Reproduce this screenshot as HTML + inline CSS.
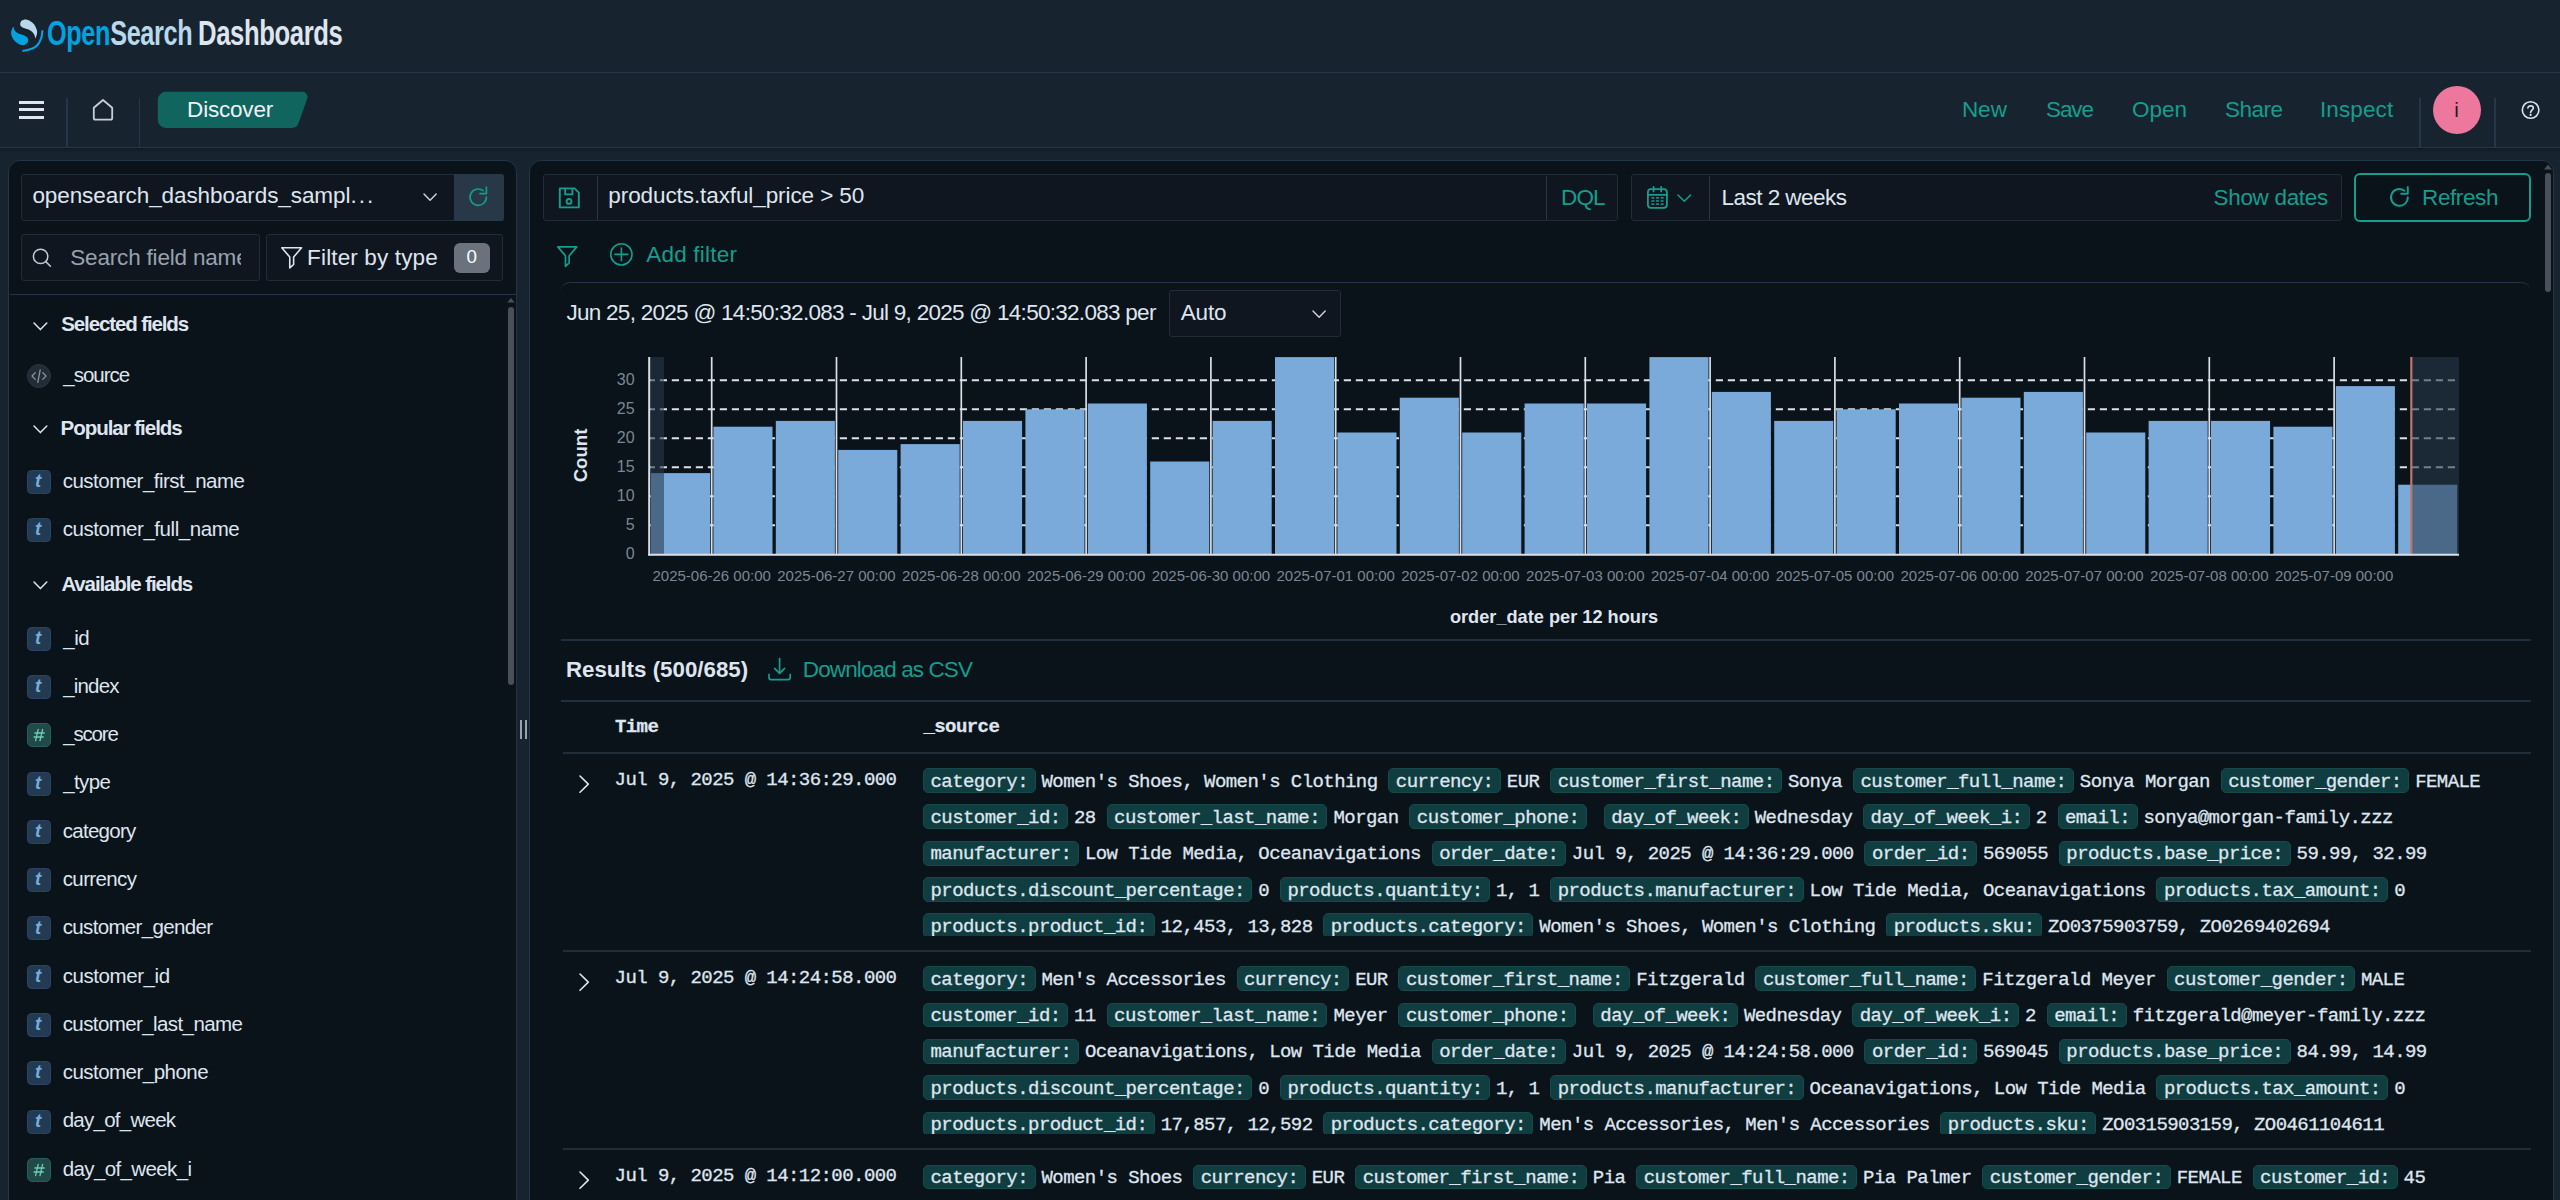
<!DOCTYPE html>
<html><head><meta charset="utf-8"><title>Discover - OpenSearch Dashboards</title>
<style>
html,body{margin:0;padding:0;width:2560px;height:1200px;overflow:hidden;}
body{width:2560px;height:1200px;overflow:hidden;background:#172430;position:relative;font-family:"Liberation Sans",sans-serif;}
.a{position:absolute;box-sizing:border-box;}
.t{position:absolute;white-space:pre;line-height:1;}
.mo{position:absolute;font-family:"Liberation Mono",monospace;font-size:19px;letter-spacing:-0.563px;line-height:1;white-space:pre;color:#DFE5EF;-webkit-text-stroke:0.3px #DFE5EF}
.bd{position:absolute;box-sizing:border-box;height:24.8px;background:#0F3D40;border:1px solid #15494B;border-radius:5px}
</style></head><body>
<div id="root" style="position:absolute;left:0;top:0;width:2560px;height:1200px;overflow:hidden;background:#172430">

<div class="a" style="left:0px;top:71.8px;width:2560px;height:1.5px;background:#243647;"></div>
<div class="a" style="left:0px;top:146.8px;width:2560px;height:1.5px;background:#243647;"></div>
<div class="a" style="left:0px;top:148.3px;width:2560px;height:5px;background:linear-gradient(#111b26,#172430);"></div>
<svg class="a" style="left:0px;top:0px;" width="60" height="72" viewBox="0 0 60 72" fill="none"><path d="M20.2 23.8 C20.3 22.8 20.8 21.5 21.6 20.8 C22.5 20.1 23.9 19.5 25.3 19.5 C26.7 19.5 28.5 20.1 30.0 20.9 C31.5 21.7 33.1 22.9 34.2 24.4 C35.3 25.9 36.3 28.5 36.8 30.0 C37.3 31.5 37.1 32.5 37.0 33.6 C36.9 34.7 36.5 35.8 36.2 36.6 C35.9 37.4 35.6 38.4 35.3 38.2 C35.0 38.0 35.0 36.6 34.6 35.6 C34.2 34.6 33.7 33.4 32.8 32.4 C31.9 31.4 30.5 30.5 29.1 29.8 C27.7 29.1 25.7 28.7 24.4 28.2 C23.1 27.7 21.9 27.3 21.2 26.6 C20.5 25.9 20.1 24.8 20.2 23.8Z" fill="#B9D9EB"/><path d="M13.6 26.6 C13.2 26.7 12.0 28.8 11.6 30.0 C11.2 31.2 11.0 32.4 11.1 33.6 C11.2 34.9 11.6 36.1 12.3 37.5 C13.0 38.9 14.3 40.6 15.5 41.8 C16.7 42.9 18.4 44.0 19.7 44.6 C21.0 45.2 22.2 45.5 23.4 45.3 C24.6 45.1 25.9 44.4 26.7 43.6 C27.5 42.9 28.0 41.8 28.1 40.8 C28.2 39.8 28.1 38.6 27.5 37.8 C26.9 36.9 26.0 36.3 24.8 35.7 C23.6 35.1 21.7 34.6 20.2 34.0 C18.7 33.4 16.9 32.7 15.9 31.9 C14.9 31.1 14.4 30.2 14.0 29.3 C13.6 28.4 14.0 26.5 13.6 26.6Z" fill="#00A3E0"/><path d="M42.4 31.0 C42.2 32.2 42.1 35.7 41.2 38.0 C40.4 40.3 39.1 43.2 37.5 45.0 C35.9 46.8 34.3 47.8 31.9 48.8 C29.5 49.8 24.6 50.4 23.2 50.7" stroke="#00A3E0" stroke-width="2.1" stroke-linecap="round"/></svg>
<span class="t" style="left:46.6px;top:15.4px;font-weight:700;font-size:35px;transform-origin:0 0;transform:scale(0.722,1);letter-spacing:-0.5px;color:#B9D9EB"><span style="color:#00A3E0">Open</span>Search</span>
<span class="t" style="left:198.1px;top:15.4px;font-weight:700;font-size:35px;transform-origin:0 0;transform:scale(0.732,1);letter-spacing:-0.5px;color:#DFE5EF">Dashboards</span>
<div class="a" style="left:19px;top:100.6px;width:24.8px;height:3.2px;background:#DFE5EF;"></div>
<div class="a" style="left:19px;top:108.1px;width:24.8px;height:3.2px;background:#DFE5EF;"></div>
<div class="a" style="left:19px;top:115.7px;width:24.8px;height:3.2px;background:#DFE5EF;"></div>
<div class="a" style="left:66.2px;top:97.8px;width:1.5px;height:49.5px;background:#243647;"></div>
<svg class="a" style="left:90px;top:96px;" width="28" height="28" viewBox="0 0 28 28" fill="none"><path d="M3.8 11.8 L13 4 L22.2 11.8 V22 A1.7 1.7 0 0 1 20.5 23.7 H5.5 A1.7 1.7 0 0 1 3.8 22 Z" stroke="#C9CED7" stroke-width="1.8" stroke-linejoin="round"/></svg>
<div class="a" style="left:138.7px;top:97.8px;width:1.5px;height:49.5px;background:#243647;"></div>
<svg class="a" style="left:156px;top:90px;" width="156" height="40" viewBox="0 0 156 40" fill="none"><path d="M9.8 1.8 H146.6 A5 5 0 0 1 151.3 8.4 L142.6 33 A7 7 0 0 1 136 37.9 H9.8 A8 8 0 0 1 1.8 29.9 V9.8 A8 8 0 0 1 9.8 1.8 Z" fill="#10655F"/></svg>
<span class="t" style="left:187.12px;top:99.05px;font-size:22.5px;color:#EEF2F7;font-weight:400;letter-spacing:-0.207px;font-family:"Liberation Sans",sans-serif;">Discover</span>
<span class="t" style="left:1961.88px;top:98.85px;font-size:22.5px;color:#159D8D;font-weight:400;letter-spacing:0.000px;font-family:"Liberation Sans",sans-serif;">New</span>
<span class="t" style="left:2046.00px;top:98.85px;font-size:22.5px;color:#159D8D;font-weight:400;letter-spacing:-1.083px;font-family:"Liberation Sans",sans-serif;">Save</span>
<span class="t" style="left:2132.00px;top:98.85px;font-size:22.5px;color:#159D8D;font-weight:400;letter-spacing:-0.042px;font-family:"Liberation Sans",sans-serif;">Open</span>
<span class="t" style="left:2225.00px;top:98.85px;font-size:22.5px;color:#159D8D;font-weight:400;letter-spacing:-0.500px;font-family:"Liberation Sans",sans-serif;">Share</span>
<span class="t" style="left:2320.00px;top:98.85px;font-size:22.5px;color:#159D8D;font-weight:400;letter-spacing:0.104px;font-family:"Liberation Sans",sans-serif;">Inspect</span>
<div class="a" style="left:2419.2px;top:97.8px;width:1.5px;height:49.5px;background:#243647;"></div>
<div class="a" style="left:2494.2px;top:97.8px;width:1.5px;height:49.5px;background:#243647;"></div>
<div class="a" style="left:2432.7px;top:85.6px;width:48.3px;height:48.3px;background:#EE789D;border-radius:50%"></div>
<span class="t" style="left:2454.32px;top:99.55px;font-size:20.5px;color:#1A1C21;font-weight:400;letter-spacing:0.000px;font-family:"Liberation Sans",sans-serif;">i</span>
<svg class="a" style="left:2518px;top:98px;" width="26" height="26" viewBox="0 0 26 26" fill="none"><circle cx="12.6" cy="12" r="8.3" stroke="#DFE5EF" stroke-width="1.6"/><path d="M9.9 9.9 C9.9 7.2 15.3 7.2 15.3 10 C15.3 12 12.6 12.1 12.6 14.4" stroke="#DFE5EF" stroke-width="1.6" stroke-linecap="round"/><circle cx="12.6" cy="16.9" r="1.1" fill="#DFE5EF"/></svg>
<div class="a" style="left:8px;top:160px;width:509px;height:1060px;background:#0A121A;border:1.5px solid #223547;border-radius:12px"></div>
<div class="a" style="left:21px;top:174px;width:482.5px;height:47.2px;background:#0F1620;border:1.5px solid #232C38;border-radius:3px"></div>
<div class="a" style="left:454px;top:174px;width:49.5px;height:47.2px;background:#283848;border-radius:0 3px 3px 0"></div>
<span class="t" style="left:32.42px;top:184.55px;font-size:22.5px;color:#DFE5EF;font-weight:400;letter-spacing:-0.084px;font-family:"Liberation Sans",sans-serif;">opensearch_dashboards_sampl</span>
<span class="t" style="left:350.50px;top:184.55px;font-size:22.5px;color:#DFE5EF;font-weight:400;letter-spacing:2.025px;font-family:"Liberation Sans",sans-serif;">...</span>
<svg class="a" style="left:421.59999999999997px;top:192.3px;" width="16.2" height="10.2" viewBox="0 0 16.2 10.2" fill="none"><path d="M2 2 L8.1 8.2 L14.2 2" stroke="#D0D6DF" stroke-width="1.4" stroke-linecap="round" stroke-linejoin="round"/></svg>
<svg class="a" style="left:463.5px;top:183.4px;" width="28.4" height="28.4" viewBox="0 0 28.4 28.4" fill="none"><path d="M22.40 14.06 A8.2 8.2 0 1 1 19.13 7.65" stroke="#159D8D" stroke-width="1.6" stroke-linecap="round"/><path d="M22.40 4.03 V10.67 H15.92" stroke="#159D8D" stroke-width="1.6" stroke-linecap="round" stroke-linejoin="round"/></svg>
<div class="a" style="left:21px;top:234.4px;width:238.5px;height:47px;background:#0F1620;border:1.5px solid #232C38;border-radius:3px"></div>
<svg class="a" style="left:30px;top:246px;" width="24" height="24" viewBox="0 0 24 24" fill="none"><circle cx="10.6" cy="10.4" r="7.2" stroke="#C5CBD4" stroke-width="1.5"/><path d="M15.8 15.6 L20.4 20.2" stroke="#C5CBD4" stroke-width="1.5" stroke-linecap="round"/></svg>
<div class="a" style="left:60px;top:240px;width:180.5px;height:36px;overflow:hidden">

<span class="t" style="left:10.30px;top:6.75px;font-size:22.5px;color:#98A2AE;font-weight:400;letter-spacing:-0.187px;font-family:"Liberation Sans",sans-serif;">Search field names</span>
</div>
<div class="a" style="left:266.2px;top:234.4px;width:237.3px;height:47px;background:#0F1620;border:1.5px solid #232C38;border-radius:3px"></div>
<svg class="a" style="left:278.6px;top:245.2px;" width="25.4" height="25.8" viewBox="0 0 25.4 25.8" fill="none"><path d="M2.8 2.8 H22.599999999999998 L14.63 12.03 V19.44 L10.77 23.00 V12.03 Z" stroke="#DFE5EF" stroke-width="1.6" stroke-linejoin="round"/></svg>
<span class="t" style="left:307.12px;top:246.75px;font-size:22.5px;color:#DFE5EF;font-weight:400;letter-spacing:0.140px;font-family:"Liberation Sans",sans-serif;">Filter by type</span>
<div class="a" style="left:454px;top:242.5px;width:36.3px;height:30px;background:#6A727D;border-radius:6px"></div>
<span class="t" style="left:466.45px;top:248.10px;font-size:18.8px;color:#FFFFFF;font-weight:400;letter-spacing:0.000px;font-family:"Liberation Sans",sans-serif;">0</span>
<div class="a" style="left:9.5px;top:293.8px;width:506px;height:1.5px;background:#223547;"></div>
<svg class="a" style="left:506px;top:296px;" width="10" height="8" viewBox="0 0 10 8" fill="none"><path d="M1.2 6.4 L5 2 L8.8 6.4 Z" fill="#4A5058"/></svg>
<div class="a" style="left:508px;top:307px;width:5.8px;height:378px;background:#4A5059;border-radius:3px"></div>
<span class="t" style="left:61.27px;top:314.15px;font-size:20.5px;color:#DFE5EF;font-weight:700;letter-spacing:-1.123px;font-family:"Liberation Sans",sans-serif;">Selected fields</span>
<svg class="a" style="left:32.0px;top:320.49999999999994px;" width="16.8" height="10.6" viewBox="0 0 16.8 10.6" fill="none"><path d="M2 2 L8.4 8.6 L14.8 2" stroke="#DFE5EF" stroke-width="1.5" stroke-linecap="round" stroke-linejoin="round"/></svg>
<span class="t" style="left:60.52px;top:417.55px;font-size:20.5px;color:#DFE5EF;font-weight:700;letter-spacing:-1.029px;font-family:"Liberation Sans",sans-serif;">Popular fields</span>
<svg class="a" style="left:32.0px;top:423.9px;" width="16.8" height="10.6" viewBox="0 0 16.8 10.6" fill="none"><path d="M2 2 L8.4 8.6 L14.8 2" stroke="#DFE5EF" stroke-width="1.5" stroke-linecap="round" stroke-linejoin="round"/></svg>
<span class="t" style="left:61.40px;top:573.55px;font-size:20.5px;color:#DFE5EF;font-weight:700;letter-spacing:-1.110px;font-family:"Liberation Sans",sans-serif;">Available fields</span>
<svg class="a" style="left:32.0px;top:579.9px;" width="16.8" height="10.6" viewBox="0 0 16.8 10.6" fill="none"><path d="M2 2 L8.4 8.6 L14.8 2" stroke="#DFE5EF" stroke-width="1.5" stroke-linecap="round" stroke-linejoin="round"/></svg>
<div class="a" style="left:26.8px;top:364.1px;width:24px;height:24px;background:#222C36;border:1.5px solid #2A3540;border-radius:50%"></div>
<svg class="a" style="left:26.8px;top:364.1px;" width="24" height="24" viewBox="0 0 24 24" fill="none"><g stroke="#8A949E" stroke-width="1.3" stroke-linecap="round" stroke-linejoin="round"><path d="M8.3 8.6 L5 12 L8.3 15.4"/><path d="M15.7 8.6 L19 12 L15.7 15.4"/><path d="M13.2 5.8 L10.8 18.4"/></g></svg>
<span class="t" style="left:63.27px;top:365.45px;font-size:20.5px;color:#DFE5EF;font-weight:400;letter-spacing:-1.013px;font-family:"Liberation Sans",sans-serif;">_source</span>
<div class="a" style="left:26.9px;top:470.2px;width:23.9px;height:24px;background:#223A52;border:1.5px solid #2A4560;border-radius:4.5px"></div>
<span class="t" style="left:35.10px;top:472.35px;font-size:18.5px;color:#79AAD9;font-weight:700;font-style:italic;letter-spacing:0.000px;font-family:"Liberation Serif",serif;">t</span>
<span class="t" style="left:62.73px;top:471.05px;font-size:20.5px;color:#DFE5EF;font-weight:400;letter-spacing:-0.512px;font-family:"Liberation Sans",sans-serif;">customer_first_name</span>
<div class="a" style="left:26.9px;top:518.2px;width:23.9px;height:24px;background:#223A52;border:1.5px solid #2A4560;border-radius:4.5px"></div>
<span class="t" style="left:35.10px;top:520.35px;font-size:18.5px;color:#79AAD9;font-weight:700;font-style:italic;letter-spacing:0.000px;font-family:"Liberation Serif",serif;">t</span>
<span class="t" style="left:62.73px;top:519.05px;font-size:20.5px;color:#DFE5EF;font-weight:400;letter-spacing:-0.450px;font-family:"Liberation Sans",sans-serif;">customer_full_name</span>
<div class="a" style="left:26.9px;top:626.8px;width:23.9px;height:24px;background:#223A52;border:1.5px solid #2A4560;border-radius:4.5px"></div>
<span class="t" style="left:35.10px;top:628.95px;font-size:18.5px;color:#79AAD9;font-weight:700;font-style:italic;letter-spacing:0.000px;font-family:"Liberation Serif",serif;">t</span>
<span class="t" style="left:63.27px;top:627.65px;font-size:20.5px;color:#DFE5EF;font-weight:400;letter-spacing:-0.450px;font-family:"Liberation Sans",sans-serif;">_id</span>
<div class="a" style="left:26.9px;top:675.0699999999999px;width:23.9px;height:24px;background:#223A52;border:1.5px solid #2A4560;border-radius:4.5px"></div>
<span class="t" style="left:35.10px;top:677.22px;font-size:18.5px;color:#79AAD9;font-weight:700;font-style:italic;letter-spacing:0.000px;font-family:"Liberation Serif",serif;">t</span>
<span class="t" style="left:63.27px;top:675.92px;font-size:20.5px;color:#DFE5EF;font-weight:400;letter-spacing:-0.840px;font-family:"Liberation Sans",sans-serif;">_index</span>
<div class="a" style="left:26.9px;top:723.3399999999999px;width:23.9px;height:24px;background:#20494A;border:1.5px solid #2A5C59;border-radius:5px"></div>
<svg class="a" style="left:26.9px;top:723.3399999999999px;" width="24" height="24" viewBox="0 0 24 24" fill="none"><g stroke="#6DCCB1" stroke-width="1.3" stroke-linecap="round"><path d="M11.2 6.4 L8.6 17.6"/><path d="M15.6 6.4 L13 17.6"/><path d="M7.9 10 H17.2"/><path d="M7 14 H16.3"/></g></svg>
<span class="t" style="left:63.27px;top:724.19px;font-size:20.5px;color:#DFE5EF;font-weight:400;letter-spacing:-1.200px;font-family:"Liberation Sans",sans-serif;">_score</span>
<div class="a" style="left:26.9px;top:771.6099999999999px;width:23.9px;height:24px;background:#223A52;border:1.5px solid #2A4560;border-radius:4.5px"></div>
<span class="t" style="left:35.10px;top:773.76px;font-size:18.5px;color:#79AAD9;font-weight:700;font-style:italic;letter-spacing:0.000px;font-family:"Liberation Serif",serif;">t</span>
<span class="t" style="left:63.27px;top:772.46px;font-size:20.5px;color:#DFE5EF;font-weight:400;letter-spacing:-0.631px;font-family:"Liberation Sans",sans-serif;">_type</span>
<div class="a" style="left:26.9px;top:819.88px;width:23.9px;height:24px;background:#223A52;border:1.5px solid #2A4560;border-radius:4.5px"></div>
<span class="t" style="left:35.10px;top:822.03px;font-size:18.5px;color:#79AAD9;font-weight:700;font-style:italic;letter-spacing:0.000px;font-family:"Liberation Serif",serif;">t</span>
<span class="t" style="left:62.73px;top:820.73px;font-size:20.5px;color:#DFE5EF;font-weight:400;letter-spacing:-0.721px;font-family:"Liberation Sans",sans-serif;">category</span>
<div class="a" style="left:26.9px;top:868.15px;width:23.9px;height:24px;background:#223A52;border:1.5px solid #2A4560;border-radius:4.5px"></div>
<span class="t" style="left:35.10px;top:870.30px;font-size:18.5px;color:#79AAD9;font-weight:700;font-style:italic;letter-spacing:0.000px;font-family:"Liberation Serif",serif;">t</span>
<span class="t" style="left:62.73px;top:869.00px;font-size:20.5px;color:#DFE5EF;font-weight:400;letter-spacing:-0.621px;font-family:"Liberation Sans",sans-serif;">currency</span>
<div class="a" style="left:26.9px;top:916.42px;width:23.9px;height:24px;background:#223A52;border:1.5px solid #2A4560;border-radius:4.5px"></div>
<span class="t" style="left:35.10px;top:918.57px;font-size:18.5px;color:#79AAD9;font-weight:700;font-style:italic;letter-spacing:0.000px;font-family:"Liberation Serif",serif;">t</span>
<span class="t" style="left:62.73px;top:917.27px;font-size:20.5px;color:#DFE5EF;font-weight:400;letter-spacing:-0.655px;font-family:"Liberation Sans",sans-serif;">customer_gender</span>
<div class="a" style="left:26.9px;top:964.69px;width:23.9px;height:24px;background:#223A52;border:1.5px solid #2A4560;border-radius:4.5px"></div>
<span class="t" style="left:35.10px;top:966.84px;font-size:18.5px;color:#79AAD9;font-weight:700;font-style:italic;letter-spacing:0.000px;font-family:"Liberation Serif",serif;">t</span>
<span class="t" style="left:62.73px;top:965.54px;font-size:20.5px;color:#DFE5EF;font-weight:400;letter-spacing:-0.430px;font-family:"Liberation Sans",sans-serif;">customer_id</span>
<div class="a" style="left:26.9px;top:1012.96px;width:23.9px;height:24px;background:#223A52;border:1.5px solid #2A4560;border-radius:4.5px"></div>
<span class="t" style="left:35.10px;top:1015.11px;font-size:18.5px;color:#79AAD9;font-weight:700;font-style:italic;letter-spacing:0.000px;font-family:"Liberation Serif",serif;">t</span>
<span class="t" style="left:62.73px;top:1013.81px;font-size:20.5px;color:#DFE5EF;font-weight:400;letter-spacing:-0.594px;font-family:"Liberation Sans",sans-serif;">customer_last_name</span>
<div class="a" style="left:26.9px;top:1061.23px;width:23.9px;height:24px;background:#223A52;border:1.5px solid #2A4560;border-radius:4.5px"></div>
<span class="t" style="left:35.10px;top:1063.38px;font-size:18.5px;color:#79AAD9;font-weight:700;font-style:italic;letter-spacing:0.000px;font-family:"Liberation Serif",serif;">t</span>
<span class="t" style="left:62.73px;top:1062.08px;font-size:20.5px;color:#DFE5EF;font-weight:400;letter-spacing:-0.529px;font-family:"Liberation Sans",sans-serif;">customer_phone</span>
<div class="a" style="left:26.9px;top:1109.5px;width:23.9px;height:24px;background:#223A52;border:1.5px solid #2A4560;border-radius:4.5px"></div>
<span class="t" style="left:35.10px;top:1111.65px;font-size:18.5px;color:#79AAD9;font-weight:700;font-style:italic;letter-spacing:0.000px;font-family:"Liberation Serif",serif;">t</span>
<span class="t" style="left:62.73px;top:1110.35px;font-size:20.5px;color:#DFE5EF;font-weight:400;letter-spacing:-0.747px;font-family:"Liberation Sans",sans-serif;">day_of_week</span>
<div class="a" style="left:26.9px;top:1157.77px;width:23.9px;height:24px;background:#20494A;border:1.5px solid #2A5C59;border-radius:5px"></div>
<svg class="a" style="left:26.9px;top:1157.77px;" width="24" height="24" viewBox="0 0 24 24" fill="none"><g stroke="#6DCCB1" stroke-width="1.3" stroke-linecap="round"><path d="M11.2 6.4 L8.6 17.6"/><path d="M15.6 6.4 L13 17.6"/><path d="M7.9 10 H17.2"/><path d="M7 14 H16.3"/></g></svg>
<span class="t" style="left:62.73px;top:1158.62px;font-size:20.5px;color:#DFE5EF;font-weight:400;letter-spacing:-0.619px;font-family:"Liberation Sans",sans-serif;">day_of_week_i</span>
<div class="a" style="left:520.2px;top:720px;width:1.5px;height:18.7px;background:#98A2AE;"></div>
<div class="a" style="left:525.2px;top:720px;width:1.5px;height:18.7px;background:#98A2AE;"></div>
<div class="a" style="left:529px;top:160px;width:2025px;height:1060px;background:#0A121A;border:1.5px solid #223547;border-radius:12px"></div>
<div class="a" style="left:542.6px;top:174px;width:1075.6px;height:47.2px;background:#0F1620;border:1.5px solid #232C38;border-radius:3px"></div>
<div class="a" style="left:597px;top:175.5px;width:1px;height:44.2px;background:#2A3644;"></div>
<svg class="a" style="left:556px;top:185px;" width="28" height="28" viewBox="0 0 28 28" fill="none"><g stroke="#159D8D" stroke-width="1.9" stroke-linejoin="round"><path d="M3.8 3.4 H18.6 L22.8 7.6 V22.4 H3.8 Z"/><path d="M9.2 3.4 V9.4 H16.4 V3.4"/><circle cx="13" cy="16.4" r="2.4"/></g></svg>
<span class="t" style="left:608.33px;top:184.55px;font-size:22.5px;color:#DFE5EF;font-weight:400;letter-spacing:-0.092px;font-family:"Liberation Sans",sans-serif;">products.taxful_price &gt; 50</span>
<div class="a" style="left:1546px;top:175.5px;width:1px;height:44.2px;background:#2A3644;"></div>
<span class="t" style="left:1561.12px;top:186.55px;font-size:22.5px;color:#159D8D;font-weight:400;letter-spacing:-0.913px;font-family:"Liberation Sans",sans-serif;">DQL</span>
<div class="a" style="left:1631.2px;top:174px;width:710.4px;height:47.2px;background:#0F1620;border:1.5px solid #232C38;border-radius:3px"></div>
<svg class="a" style="left:1644px;top:183px;" width="28" height="28" viewBox="0 0 28 28" fill="none"><g stroke="#159D8D" stroke-width="1.8" stroke-linecap="round"><rect x="3.9" y="6.2" width="19" height="18.6" rx="3"/><path d="M3.9 11.8 H22.9"/><path d="M9.6 3.8 V8.4"/><path d="M17.2 3.8 V8.4"/></g><g stroke="#159D8D" stroke-width="1.5" stroke-linecap="butt"><path d="M7.4 14.9 H10.4"/><path d="M12 14.9 H15"/><path d="M16.6 14.9 H19.6"/><path d="M7.4 18 H10.4"/><path d="M12 18 H15"/><path d="M16.6 18 H19.6"/><path d="M7.4 21.1 H10.4"/><path d="M12 21.1 H15"/><path d="M16.6 21.1 H19.6"/></g></svg>
<svg class="a" style="left:1675.8px;top:192.54999999999998px;" width="16.6" height="10.3" viewBox="0 0 16.6 10.3" fill="none"><path d="M2 2 L8.3 8.3 L14.6 2" stroke="#159D8D" stroke-width="1.5" stroke-linecap="round" stroke-linejoin="round"/></svg>
<div class="a" style="left:1709px;top:175.5px;width:1px;height:44.2px;background:#2A3644;"></div>
<span class="t" style="left:1721.53px;top:186.55px;font-size:22.5px;color:#DFE5EF;font-weight:400;letter-spacing:-0.532px;font-family:"Liberation Sans",sans-serif;">Last 2 weeks</span>
<span class="t" style="left:2213.50px;top:186.55px;font-size:22.5px;color:#159D8D;font-weight:400;letter-spacing:-0.319px;font-family:"Liberation Sans",sans-serif;">Show dates</span>
<div class="a" style="left:2353.8px;top:173px;width:177px;height:48.5px;background:#0A121A;border:2px solid #159D8D;border-radius:6px"></div>
<svg class="a" style="left:2384.7px;top:183.0px;" width="28.8" height="28.8" viewBox="0 0 28.8 28.8" fill="none"><path d="M22.80 14.25 A8.4 8.4 0 1 1 19.46 7.69" stroke="#159D8D" stroke-width="1.9" stroke-linecap="round"/><path d="M22.80 3.98 V10.79 H16.16" stroke="#159D8D" stroke-width="1.9" stroke-linecap="round" stroke-linejoin="round"/></svg>
<span class="t" style="left:2422.12px;top:186.55px;font-size:22.5px;color:#159D8D;font-weight:400;letter-spacing:-0.417px;font-family:"Liberation Sans",sans-serif;">Refresh</span>
<svg class="a" style="left:2543px;top:161px;" width="10" height="10" viewBox="0 0 10 10" fill="none"><path d="M1 8.4 L5 3.6 L9 8.4 Z" fill="#4A5058"/></svg>
<div class="a" style="left:2545px;top:172.6px;width:6px;height:119px;background:#4A5059;border-radius:3px"></div>
<svg class="a" style="left:555.4px;top:244px;" width="24.6" height="25.2" viewBox="0 0 24.6 25.2" fill="none"><path d="M2.85 2.85 H21.75 L14.15 11.75 V18.96 L10.45 22.35 V11.75 Z" stroke="#159D8D" stroke-width="1.7" stroke-linejoin="round"/></svg>
<svg class="a" style="left:607px;top:240px;" width="30" height="30" viewBox="0 0 30 30" fill="none"><circle cx="14.4" cy="14.4" r="10.6" stroke="#159D8D" stroke-width="1.6"/><path d="M14.4 8 V20.8 M8 14.4 H20.8" stroke="#159D8D" stroke-width="1.6" stroke-linecap="round"/></svg>
<span class="t" style="left:646.20px;top:243.65px;font-size:22.5px;color:#159D8D;font-weight:400;letter-spacing:0.225px;font-family:"Liberation Sans",sans-serif;">Add filter</span>
<div class="a" style="left:560px;top:282px;width:1971px;height:940px;background:#0A121A;border-top:1.5px solid #223547;border-left:0;border-radius:10px 10px 0 0"></div>
<span class="t" style="left:566.42px;top:302.35px;font-size:22.5px;color:#DFE5EF;font-weight:400;letter-spacing:-0.719px;font-family:"Liberation Sans",sans-serif;">Jun 25, 2025 @ 14:50:32.083 - Jul 9, 2025 @ 14:50:32.083 per</span>
<div class="a" style="left:1168.7px;top:290px;width:172.3px;height:46.7px;background:#0F1620;border:1.5px solid #232C38;border-radius:3px"></div>
<span class="t" style="left:1180.70px;top:302.35px;font-size:22.5px;color:#DFE5EF;font-weight:400;letter-spacing:-0.125px;font-family:"Liberation Sans",sans-serif;">Auto</span>
<svg class="a" style="left:1311.4px;top:308.5px;" width="16.2" height="10.2" viewBox="0 0 16.2 10.2" fill="none"><path d="M2 2 L8.1 8.2 L14.2 2" stroke="#D0D6DF" stroke-width="1.4" stroke-linecap="round" stroke-linejoin="round"/></svg>
<svg class="a" style="left:560px;top:345px;font-family:'Liberation Sans',sans-serif" width="1920" height="300" viewBox="0 0 1920 300"><path d="M90.0 180.30 H1899.0" stroke="#DCE0E6" stroke-width="2.1" stroke-dasharray="7.2 4.8" stroke-dashoffset="2.2"/><path d="M90.0 151.30 H1899.0" stroke="#DCE0E6" stroke-width="2.1" stroke-dasharray="7.2 4.8" stroke-dashoffset="2.2"/><path d="M90.0 122.30 H1899.0" stroke="#DCE0E6" stroke-width="2.1" stroke-dasharray="7.2 4.8" stroke-dashoffset="2.2"/><path d="M90.0 93.30 H1899.0" stroke="#DCE0E6" stroke-width="2.1" stroke-dasharray="7.2 4.8" stroke-dashoffset="2.2"/><path d="M90.0 64.30 H1899.0" stroke="#DCE0E6" stroke-width="2.1" stroke-dasharray="7.2 4.8" stroke-dashoffset="2.2"/><path d="M90.0 35.30 H1899.0" stroke="#DCE0E6" stroke-width="2.1" stroke-dasharray="7.2 4.8" stroke-dashoffset="2.2"/><rect x="91.00" y="128.10" width="59.1" height="81.20" fill="#79AAD9"/><rect x="153.40" y="81.70" width="59.1" height="127.60" fill="#79AAD9"/><rect x="215.80" y="75.90" width="59.1" height="133.40" fill="#79AAD9"/><rect x="278.20" y="104.90" width="59.1" height="104.40" fill="#79AAD9"/><rect x="340.60" y="99.10" width="59.1" height="110.20" fill="#79AAD9"/><rect x="403.00" y="75.90" width="59.1" height="133.40" fill="#79AAD9"/><rect x="465.40" y="64.30" width="59.1" height="145.00" fill="#79AAD9"/><rect x="527.80" y="58.50" width="59.1" height="150.80" fill="#79AAD9"/><rect x="590.20" y="116.50" width="59.1" height="92.80" fill="#79AAD9"/><rect x="652.60" y="75.90" width="59.1" height="133.40" fill="#79AAD9"/><rect x="715.00" y="12.10" width="59.1" height="197.20" fill="#79AAD9"/><rect x="777.40" y="87.50" width="59.1" height="121.80" fill="#79AAD9"/><rect x="839.80" y="52.70" width="59.1" height="156.60" fill="#79AAD9"/><rect x="902.20" y="87.50" width="59.1" height="121.80" fill="#79AAD9"/><rect x="964.60" y="58.50" width="59.1" height="150.80" fill="#79AAD9"/><rect x="1027.00" y="58.50" width="59.1" height="150.80" fill="#79AAD9"/><rect x="1089.40" y="12.10" width="59.1" height="197.20" fill="#79AAD9"/><rect x="1151.80" y="46.90" width="59.1" height="162.40" fill="#79AAD9"/><rect x="1214.20" y="75.90" width="59.1" height="133.40" fill="#79AAD9"/><rect x="1276.60" y="64.30" width="59.1" height="145.00" fill="#79AAD9"/><rect x="1339.00" y="58.50" width="59.1" height="150.80" fill="#79AAD9"/><rect x="1401.40" y="52.70" width="59.1" height="156.60" fill="#79AAD9"/><rect x="1463.80" y="46.90" width="59.1" height="162.40" fill="#79AAD9"/><rect x="1526.20" y="87.50" width="59.1" height="121.80" fill="#79AAD9"/><rect x="1588.60" y="75.90" width="59.1" height="133.40" fill="#79AAD9"/><rect x="1651.00" y="75.90" width="59.1" height="133.40" fill="#79AAD9"/><rect x="1713.40" y="81.70" width="59.1" height="127.60" fill="#79AAD9"/><rect x="1775.80" y="41.10" width="59.1" height="168.20" fill="#79AAD9"/><rect x="1838.20" y="139.70" width="59.1" height="69.60" fill="#79AAD9"/><path d="M151.70 12.0 V209.8" stroke="#DCE0E6" stroke-width="1.7"/><path d="M276.50 12.0 V209.8" stroke="#DCE0E6" stroke-width="1.7"/><path d="M401.30 12.0 V209.8" stroke="#DCE0E6" stroke-width="1.7"/><path d="M526.10 12.0 V209.8" stroke="#DCE0E6" stroke-width="1.7"/><path d="M650.90 12.0 V209.8" stroke="#DCE0E6" stroke-width="1.7"/><path d="M775.70 12.0 V209.8" stroke="#DCE0E6" stroke-width="1.7"/><path d="M900.50 12.0 V209.8" stroke="#DCE0E6" stroke-width="1.7"/><path d="M1025.30 12.0 V209.8" stroke="#DCE0E6" stroke-width="1.7"/><path d="M1150.10 12.0 V209.8" stroke="#DCE0E6" stroke-width="1.7"/><path d="M1274.90 12.0 V209.8" stroke="#DCE0E6" stroke-width="1.7"/><path d="M1399.70 12.0 V209.8" stroke="#DCE0E6" stroke-width="1.7"/><path d="M1524.50 12.0 V209.8" stroke="#DCE0E6" stroke-width="1.7"/><path d="M1649.30 12.0 V209.8" stroke="#DCE0E6" stroke-width="1.7"/><path d="M1774.10 12.0 V209.8" stroke="#DCE0E6" stroke-width="1.7"/><rect x="90.3" y="12.0" width="13.7" height="197.3" fill="rgba(40,56,75,0.58)"/><rect x="1852.0" y="12.0" width="47" height="197.3" fill="rgba(40,56,75,0.58)"/><path d="M1851.3 12.0 V209.3" stroke="#C3746B" stroke-width="2.2"/><path d="M89.2 12.0 V210.5" stroke="#DCE0E6" stroke-width="2"/><path d="M88.2 209.8 H1899.0" stroke="#DCE0E6" stroke-width="1.9"/><text x="74.6" y="213.75" text-anchor="end" font-size="16" fill="#7C8794">0</text><text x="74.6" y="184.75" text-anchor="end" font-size="16" fill="#7C8794">5</text><text x="74.6" y="155.75" text-anchor="end" font-size="16" fill="#7C8794">10</text><text x="74.6" y="126.75" text-anchor="end" font-size="16" fill="#7C8794">15</text><text x="74.6" y="97.75" text-anchor="end" font-size="16" fill="#7C8794">20</text><text x="74.6" y="68.75" text-anchor="end" font-size="16" fill="#7C8794">25</text><text x="74.6" y="39.75" text-anchor="end" font-size="16" fill="#7C8794">30</text><text x="151.70" y="236.0" text-anchor="middle" font-size="15" fill="#7C8794">2025-06-26 00:00</text><text x="276.50" y="236.0" text-anchor="middle" font-size="15" fill="#7C8794">2025-06-27 00:00</text><text x="401.30" y="236.0" text-anchor="middle" font-size="15" fill="#7C8794">2025-06-28 00:00</text><text x="526.10" y="236.0" text-anchor="middle" font-size="15" fill="#7C8794">2025-06-29 00:00</text><text x="650.90" y="236.0" text-anchor="middle" font-size="15" fill="#7C8794">2025-06-30 00:00</text><text x="775.70" y="236.0" text-anchor="middle" font-size="15" fill="#7C8794">2025-07-01 00:00</text><text x="900.50" y="236.0" text-anchor="middle" font-size="15" fill="#7C8794">2025-07-02 00:00</text><text x="1025.30" y="236.0" text-anchor="middle" font-size="15" fill="#7C8794">2025-07-03 00:00</text><text x="1150.10" y="236.0" text-anchor="middle" font-size="15" fill="#7C8794">2025-07-04 00:00</text><text x="1274.90" y="236.0" text-anchor="middle" font-size="15" fill="#7C8794">2025-07-05 00:00</text><text x="1399.70" y="236.0" text-anchor="middle" font-size="15" fill="#7C8794">2025-07-06 00:00</text><text x="1524.50" y="236.0" text-anchor="middle" font-size="15" fill="#7C8794">2025-07-07 00:00</text><text x="1649.30" y="236.0" text-anchor="middle" font-size="15" fill="#7C8794">2025-07-08 00:00</text><text x="1774.10" y="236.0" text-anchor="middle" font-size="15" fill="#7C8794">2025-07-09 00:00</text><text transform="translate(27.0 110.5) rotate(-90)" text-anchor="middle" font-size="18.6" font-weight="700" fill="#DFE5EF">Count</text><text x="994.0" y="278.4" text-anchor="middle" font-size="18.2" font-weight="700" fill="#DFE5EF">order_date per 12 hours</text></svg>
<div class="a" style="left:560.5px;top:639px;width:1970px;height:1.5px;background:#1F2F3F;"></div>
<span class="t" style="left:565.90px;top:659.35px;font-size:22.3px;color:#DFE5EF;font-weight:700;letter-spacing:0.003px;font-family:"Liberation Sans",sans-serif;">Results (500/685)</span>
<svg class="a" style="left:766px;top:655px;" width="28" height="28" viewBox="0 0 28 28" fill="none"><g stroke="#159D8D" stroke-width="1.7" stroke-linecap="round" stroke-linejoin="round"><path d="M13.6 3.6 V18.2"/><path d="M8.6 13.4 L13.6 18.4 L18.6 13.4"/><path d="M3 19.4 V22.6 A2 2 0 0 0 5 24.6 H22.2 A2 2 0 0 0 24.2 22.6 V19.4"/></g></svg>
<span class="t" style="left:802.83px;top:659.25px;font-size:22.5px;color:#159D8D;font-weight:400;letter-spacing:-0.888px;font-family:"Liberation Sans",sans-serif;">Download as CSV</span>
<div class="a" style="left:560.5px;top:700.1px;width:1970px;height:1.5px;background:#1F2F3F;"></div>
<span class="mo" style="left:614.90px;top:718.33px;font-weight:700;">Time</span>
<span class="mo" style="left:923.40px;top:718.33px;font-weight:700;">_source</span>
<div class="a" style="left:563px;top:752px;width:1967.5px;height:1.5px;background:#222D3A;"></div>
<svg class="a" style="left:578.35px;top:773.6500000000001px;" width="12.3" height="20.3" viewBox="0 0 12.3 20.3" fill="none"><path d="M2 2 L10.3 10.15 L2 18.3" stroke="#DFE5EF" stroke-width="1.6" stroke-linecap="round" stroke-linejoin="round"/></svg>
<span class="mo" style="left:614.60px;top:770.93px;font-weight:400;">Jul 9, 2025 @ 14:36:29.000</span>
<div class="a" style="left:915px;top:762.7px;width:1620px;height:172.9px;overflow:hidden">
<div class="bd" style="left:8.00px;top:5.50px;width:112.53px"></div>
<span class="mo" style="left:15.50px;top:9.93px">category:</span>
<span class="mo" style="left:126.53px;top:9.93px">Women&#39;s Shoes, Women&#39;s Clothing</span>
<div class="bd" style="left:473.32px;top:5.50px;width:112.53px"></div>
<span class="mo" style="left:480.82px;top:9.93px">currency:</span>
<span class="mo" style="left:591.85px;top:9.93px">EUR</span>
<div class="bd" style="left:635.20px;top:5.50px;width:231.74px"></div>
<span class="mo" style="left:642.70px;top:9.93px">customer_first_name:</span>
<span class="mo" style="left:872.94px;top:9.93px">Sonya</span>
<div class="bd" style="left:937.96px;top:5.50px;width:220.90px"></div>
<span class="mo" style="left:945.46px;top:9.93px">customer_full_name:</span>
<span class="mo" style="left:1164.86px;top:9.93px">Sonya Morgan</span>
<div class="bd" style="left:1305.74px;top:5.50px;width:188.39px"></div>
<span class="mo" style="left:1313.24px;top:9.93px">customer_gender:</span>
<span class="mo" style="left:1500.14px;top:9.93px">FEMALE</span>
<div class="bd" style="left:8.00px;top:41.80px;width:145.04px"></div>
<span class="mo" style="left:15.50px;top:46.23px">customer_id:</span>
<span class="mo" style="left:159.04px;top:46.23px">28</span>
<div class="bd" style="left:191.55px;top:41.80px;width:220.90px"></div>
<span class="mo" style="left:199.05px;top:46.23px">customer_last_name:</span>
<span class="mo" style="left:418.46px;top:46.23px">Morgan</span>
<div class="bd" style="left:494.32px;top:41.80px;width:177.56px"></div>
<span class="mo" style="left:501.82px;top:46.23px">customer_phone:</span>
<div class="bd" style="left:688.71px;top:41.80px;width:145.04px"></div>
<span class="mo" style="left:696.21px;top:46.23px">day_of_week:</span>
<span class="mo" style="left:839.75px;top:46.23px">Wednesday</span>
<div class="bd" style="left:948.12px;top:41.80px;width:166.72px"></div>
<span class="mo" style="left:955.62px;top:46.23px">day_of_week_i:</span>
<span class="mo" style="left:1120.84px;top:46.23px">2</span>
<div class="bd" style="left:1142.51px;top:41.80px;width:80.02px"></div>
<span class="mo" style="left:1150.01px;top:46.23px">email:</span>
<span class="mo" style="left:1228.54px;top:46.23px">sonya@morgan-family.zzz</span>
<div class="bd" style="left:8.00px;top:78.10px;width:155.88px"></div>
<span class="mo" style="left:15.50px;top:82.53px">manufacturer:</span>
<span class="mo" style="left:169.88px;top:82.53px">Low Tide Media, Oceanavigations</span>
<div class="bd" style="left:516.66px;top:78.10px;width:134.21px"></div>
<span class="mo" style="left:524.16px;top:82.53px">order_date:</span>
<span class="mo" style="left:656.87px;top:82.53px">Jul 9, 2025 @ 14:36:29.000</span>
<div class="bd" style="left:949.47px;top:78.10px;width:112.53px"></div>
<span class="mo" style="left:956.97px;top:82.53px">order_id:</span>
<span class="mo" style="left:1068.00px;top:82.53px">569055</span>
<div class="bd" style="left:1143.86px;top:78.10px;width:231.74px"></div>
<span class="mo" style="left:1151.36px;top:82.53px">products.base_price:</span>
<span class="mo" style="left:1381.60px;top:82.53px">59.99, 32.99</span>
<div class="bd" style="left:8.00px;top:114.40px;width:329.27px"></div>
<span class="mo" style="left:15.50px;top:118.83px">products.discount_percentage:</span>
<span class="mo" style="left:343.27px;top:118.83px">0</span>
<div class="bd" style="left:364.95px;top:114.40px;width:210.07px"></div>
<span class="mo" style="left:372.45px;top:118.83px">products.quantity:</span>
<span class="mo" style="left:581.01px;top:118.83px">1, 1</span>
<div class="bd" style="left:635.20px;top:114.40px;width:253.41px"></div>
<span class="mo" style="left:642.70px;top:118.83px">products.manufacturer:</span>
<span class="mo" style="left:894.61px;top:118.83px">Low Tide Media, Oceanavigations</span>
<div class="bd" style="left:1241.40px;top:114.40px;width:231.74px"></div>
<span class="mo" style="left:1248.90px;top:118.83px">products.tax_amount:</span>
<span class="mo" style="left:1479.14px;top:118.83px">0</span>
<div class="bd" style="left:8.00px;top:150.70px;width:231.74px"></div>
<span class="mo" style="left:15.50px;top:155.13px">products.product_id:</span>
<span class="mo" style="left:245.74px;top:155.13px">12,453, 13,828</span>
<div class="bd" style="left:408.29px;top:150.70px;width:210.07px"></div>
<span class="mo" style="left:415.79px;top:155.13px">products.category:</span>
<span class="mo" style="left:624.36px;top:155.13px">Women&#39;s Shoes, Women&#39;s Clothing</span>
<div class="bd" style="left:971.14px;top:150.70px;width:155.88px"></div>
<span class="mo" style="left:978.64px;top:155.13px">products.sku:</span>
<span class="mo" style="left:1133.03px;top:155.13px">ZO0375903759, ZO0269402694</span>
</div>
<div class="a" style="left:563px;top:950.1999999999999px;width:1967.5px;height:1.5px;background:#222D3A;"></div>
<svg class="a" style="left:578.35px;top:971.85px;" width="12.3" height="20.3" viewBox="0 0 12.3 20.3" fill="none"><path d="M2 2 L10.3 10.15 L2 18.3" stroke="#DFE5EF" stroke-width="1.6" stroke-linecap="round" stroke-linejoin="round"/></svg>
<span class="mo" style="left:614.60px;top:969.13px;font-weight:400;">Jul 9, 2025 @ 14:24:58.000</span>
<div class="a" style="left:915px;top:960.9px;width:1620px;height:172.9px;overflow:hidden">
<div class="bd" style="left:8.00px;top:5.50px;width:112.53px"></div>
<span class="mo" style="left:15.50px;top:9.93px">category:</span>
<span class="mo" style="left:126.53px;top:9.93px">Men&#39;s Accessories</span>
<div class="bd" style="left:321.60px;top:5.50px;width:112.53px"></div>
<span class="mo" style="left:329.10px;top:9.93px">currency:</span>
<span class="mo" style="left:440.13px;top:9.93px">EUR</span>
<div class="bd" style="left:483.48px;top:5.50px;width:231.74px"></div>
<span class="mo" style="left:490.98px;top:9.93px">customer_first_name:</span>
<span class="mo" style="left:721.22px;top:9.93px">Fitzgerald</span>
<div class="bd" style="left:840.43px;top:5.50px;width:220.90px"></div>
<span class="mo" style="left:847.93px;top:9.93px">customer_full_name:</span>
<span class="mo" style="left:1067.33px;top:9.93px">Fitzgerald Meyer</span>
<div class="bd" style="left:1251.56px;top:5.50px;width:188.39px"></div>
<span class="mo" style="left:1259.06px;top:9.93px">customer_gender:</span>
<span class="mo" style="left:1445.95px;top:9.93px">MALE</span>
<div class="bd" style="left:8.00px;top:41.80px;width:145.04px"></div>
<span class="mo" style="left:15.50px;top:46.23px">customer_id:</span>
<span class="mo" style="left:159.04px;top:46.23px">11</span>
<div class="bd" style="left:191.55px;top:41.80px;width:220.90px"></div>
<span class="mo" style="left:199.05px;top:46.23px">customer_last_name:</span>
<span class="mo" style="left:418.46px;top:46.23px">Meyer</span>
<div class="bd" style="left:483.48px;top:41.80px;width:177.56px"></div>
<span class="mo" style="left:490.98px;top:46.23px">customer_phone:</span>
<div class="bd" style="left:677.87px;top:41.80px;width:145.04px"></div>
<span class="mo" style="left:685.37px;top:46.23px">day_of_week:</span>
<span class="mo" style="left:828.92px;top:46.23px">Wednesday</span>
<div class="bd" style="left:937.29px;top:41.80px;width:166.72px"></div>
<span class="mo" style="left:944.79px;top:46.23px">day_of_week_i:</span>
<span class="mo" style="left:1110.00px;top:46.23px">2</span>
<div class="bd" style="left:1131.68px;top:41.80px;width:80.02px"></div>
<span class="mo" style="left:1139.18px;top:46.23px">email:</span>
<span class="mo" style="left:1217.70px;top:46.23px">fitzgerald@meyer-family.zzz</span>
<div class="bd" style="left:8.00px;top:78.10px;width:155.88px"></div>
<span class="mo" style="left:15.50px;top:82.53px">manufacturer:</span>
<span class="mo" style="left:169.88px;top:82.53px">Oceanavigations, Low Tide Media</span>
<div class="bd" style="left:516.66px;top:78.10px;width:134.21px"></div>
<span class="mo" style="left:524.16px;top:82.53px">order_date:</span>
<span class="mo" style="left:656.87px;top:82.53px">Jul 9, 2025 @ 14:24:58.000</span>
<div class="bd" style="left:949.47px;top:78.10px;width:112.53px"></div>
<span class="mo" style="left:956.97px;top:82.53px">order_id:</span>
<span class="mo" style="left:1068.00px;top:82.53px">569045</span>
<div class="bd" style="left:1143.86px;top:78.10px;width:231.74px"></div>
<span class="mo" style="left:1151.36px;top:82.53px">products.base_price:</span>
<span class="mo" style="left:1381.60px;top:82.53px">84.99, 14.99</span>
<div class="bd" style="left:8.00px;top:114.40px;width:329.27px"></div>
<span class="mo" style="left:15.50px;top:118.83px">products.discount_percentage:</span>
<span class="mo" style="left:343.27px;top:118.83px">0</span>
<div class="bd" style="left:364.95px;top:114.40px;width:210.07px"></div>
<span class="mo" style="left:372.45px;top:118.83px">products.quantity:</span>
<span class="mo" style="left:581.01px;top:118.83px">1, 1</span>
<div class="bd" style="left:635.20px;top:114.40px;width:253.41px"></div>
<span class="mo" style="left:642.70px;top:118.83px">products.manufacturer:</span>
<span class="mo" style="left:894.61px;top:118.83px">Oceanavigations, Low Tide Media</span>
<div class="bd" style="left:1241.40px;top:114.40px;width:231.74px"></div>
<span class="mo" style="left:1248.90px;top:118.83px">products.tax_amount:</span>
<span class="mo" style="left:1479.14px;top:118.83px">0</span>
<div class="bd" style="left:8.00px;top:150.70px;width:231.74px"></div>
<span class="mo" style="left:15.50px;top:155.13px">products.product_id:</span>
<span class="mo" style="left:245.74px;top:155.13px">17,857, 12,592</span>
<div class="bd" style="left:408.29px;top:150.70px;width:210.07px"></div>
<span class="mo" style="left:415.79px;top:155.13px">products.category:</span>
<span class="mo" style="left:624.36px;top:155.13px">Men&#39;s Accessories, Men&#39;s Accessories</span>
<div class="bd" style="left:1025.33px;top:150.70px;width:155.88px"></div>
<span class="mo" style="left:1032.83px;top:155.13px">products.sku:</span>
<span class="mo" style="left:1187.21px;top:155.13px">ZO0315903159, ZO0461104611</span>
</div>
<div class="a" style="left:563px;top:1148.3999999999999px;width:1967.5px;height:1.5px;background:#222D3A;"></div>
<svg class="a" style="left:578.35px;top:1170.0499999999997px;" width="12.3" height="20.3" viewBox="0 0 12.3 20.3" fill="none"><path d="M2 2 L10.3 10.15 L2 18.3" stroke="#DFE5EF" stroke-width="1.6" stroke-linecap="round" stroke-linejoin="round"/></svg>
<span class="mo" style="left:614.60px;top:1167.33px;font-weight:400;">Jul 9, 2025 @ 14:12:00.000</span>
<div class="a" style="left:915px;top:1159.1px;width:1620px;height:172.9px;overflow:hidden">
<div class="bd" style="left:8.00px;top:5.50px;width:112.53px"></div>
<span class="mo" style="left:15.50px;top:9.93px">category:</span>
<span class="mo" style="left:126.53px;top:9.93px">Women&#39;s Shoes</span>
<div class="bd" style="left:278.25px;top:5.50px;width:112.53px"></div>
<span class="mo" style="left:285.75px;top:9.93px">currency:</span>
<span class="mo" style="left:396.78px;top:9.93px">EUR</span>
<div class="bd" style="left:440.13px;top:5.50px;width:231.74px"></div>
<span class="mo" style="left:447.63px;top:9.93px">customer_first_name:</span>
<span class="mo" style="left:677.87px;top:9.93px">Pia</span>
<div class="bd" style="left:721.22px;top:5.50px;width:220.90px"></div>
<span class="mo" style="left:728.72px;top:9.93px">customer_full_name:</span>
<span class="mo" style="left:948.12px;top:9.93px">Pia Palmer</span>
<div class="bd" style="left:1067.33px;top:5.50px;width:188.39px"></div>
<span class="mo" style="left:1074.83px;top:9.93px">customer_gender:</span>
<span class="mo" style="left:1261.72px;top:9.93px">FEMALE</span>
<div class="bd" style="left:1337.58px;top:5.50px;width:145.04px"></div>
<span class="mo" style="left:1345.08px;top:9.93px">customer_id:</span>
<span class="mo" style="left:1488.62px;top:9.93px">45</span>
</div>
</div></body></html>
